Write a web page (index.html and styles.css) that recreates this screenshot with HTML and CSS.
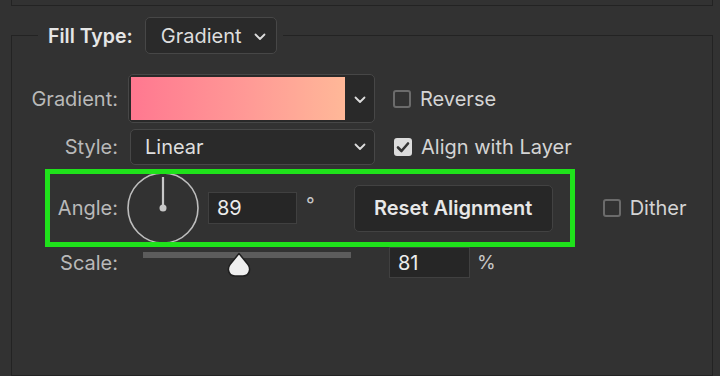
FILE: index.html
```html
<!DOCTYPE html>
<html>
<head>
<meta charset="utf-8">
<link rel="stylesheet" href="styles.css">
</head>
<body>
<div class="top-box"></div>
<fieldset class="panel">
  <legend class="legend">
    <span class="legend-label">Fill Type:</span>
    <span class="select select-fill">Gradient
      <svg class="chev" width="12" height="8" viewBox="0 0 12 8"><path d="M1.5 1.5 L6 6 L10.5 1.5" fill="none" stroke="#dcdcdc" stroke-width="1.8" stroke-linecap="round" stroke-linejoin="round"/></svg>
    </span>
  </legend>

  <div class="row row-gradient">
    <span class="label">Gradient:</span>
    <div class="grad-picker">
      <div class="grad-swatch"></div>
      <div class="grad-arrow">
        <svg width="12" height="8" viewBox="0 0 12 8"><path d="M1.5 1.5 L6 6 L10.5 1.5" fill="none" stroke="#dcdcdc" stroke-width="1.8" stroke-linecap="round" stroke-linejoin="round"/></svg>
      </div>
    </div>
    <label class="check"><span class="box"></span><span class="check-text">Reverse</span></label>
  </div>

  <div class="row row-style">
    <span class="label">Style:</span>
    <div class="select select-style"><span>Linear</span>
      <svg width="12" height="8" viewBox="0 0 12 8"><path d="M1.5 1.5 L6 6 L10.5 1.5" fill="none" stroke="#dcdcdc" stroke-width="1.8" stroke-linecap="round" stroke-linejoin="round"/></svg>
    </div>
    <label class="check check-align"><span class="box box-on">
      <svg width="14" height="12" viewBox="0 0 14 12"><path d="M2 6.5 L5.5 10 L12 2.5" fill="none" stroke="#333" stroke-width="2.6" stroke-linecap="round" stroke-linejoin="round"/></svg>
    </span><span class="check-text">Align with Layer</span></label>
  </div>

  <div class="row row-angle">
    <span class="label">Angle:</span>
    <svg class="dial" width="72" height="72" viewBox="0 0 72 72">
      <circle cx="36" cy="36" r="35" fill="none" stroke="#bdbdbd" stroke-width="1.6"/>
      <line x1="36" y1="36" x2="36" y2="5" stroke="#c8c8c8" stroke-width="2.2"/>
      <circle cx="36" cy="36" r="3.5" fill="#c8c8c8"/>
    </svg>
    <div class="num-input num-angle">89</div>
    <span class="unit unit-deg">°</span>
    <div class="btn">Reset Alignment</div>
    <label class="check check-dither"><span class="box"></span><span class="check-text">Dither</span></label>
  </div>

  <div class="row row-scale">
    <span class="label">Scale:</span>
    <div class="slider">
      <div class="track"></div>
      <svg class="thumb" width="24" height="26" viewBox="0 0 24 26"><path d="M12 1.5 L21 12.5 Q23 15 22.5 18.5 Q21.5 24 16 24 L8 24 Q2.5 24 1.5 18.5 Q1 15 3 12.5 Z" fill="#efefef" stroke="#1f1f1f" stroke-width="1.5" stroke-linejoin="round"/></svg>
    </div>
    <div class="num-input num-scale">81</div>
    <span class="unit">%</span>
  </div>
</fieldset>
</body>
</html>
```

FILE: styles.css
```css
*, *::before, *::after { box-sizing: border-box; }
html, body {
  margin: 0;
  padding: 0;
  background: #323232;
  width: 720px;
  height: 376px;
  overflow: hidden;
  font-family: Inter, "Noto Sans", "Liberation Sans", sans-serif;
  color: #dcdcdc;
}
.top-box {
  height: 6px;
  margin: 0 7px 0 11px;
  border-left: 1px solid #232323;
  border-right: 1px solid #232323;
  border-bottom: 1.5px solid #232323;
}
.panel {
  margin: 11px 7px 0 11px;
  padding: 20px 0 0 0;
  border: 1.5px solid #232323;
  height: 359px;
  min-width: 0;
}
.legend {
  margin-left: 26px;
  padding: 0 6px 0 10px;
  display: flex;
  align-items: center;
}
.legend-label {
  font-size: 19.5px;
  font-weight: 600;
  color: #e6e6e6;
  margin-right: 12px;
}
.select {
  display: flex;
  align-items: center;
  background: #2a2a2a;
  border: 1.5px solid #474747;
  border-radius: 5px;
  color: #dedede;
  font-size: 20px;
}
.select-fill {
  height: 37px;
  width: 132px;
  padding: 0 10px 0 15px;
  justify-content: space-between;
}
.select-fill .chev { margin-top: 2px; }
.row {
  display: flex;
  align-items: center;
}
.label {
  width: 106px;
  text-align: right;
  font-size: 20px;
  color: #b9b9b9;
  flex: none;
}
.row-gradient { height: 49px; }
.grad-picker {
  margin-left: 10px;
  width: 247px;
  height: 49px;
  display: flex;
  border: 1.5px solid #474747;
  border-radius: 5px;
  background: #292929;
  padding: 2px 0 2px 2px;
}
.grad-swatch {
  flex: none;
  width: 214px;
  height: 100%;
  background: linear-gradient(to right, #ff7890, #ff9a96 55%, #ffb898);
}
.grad-arrow {
  flex: 1;
  display: flex;
  align-items: center;
  justify-content: center;
  padding-top: 2px;
}
.check {
  display: flex;
  align-items: center;
  margin-left: 18px;
}
.box {
  width: 18px;
  height: 18px;
  border: 2px solid #6b6b6b;
  border-radius: 3px;
  display: flex;
  align-items: center;
  justify-content: center;
  flex: none;
}
.box-on {
  background: #dcdcdc;
  border-color: #dcdcdc;
}
.check-text {
  margin-left: 9px;
  font-size: 20px;
  color: #d4d4d4;
}
.row-style {
  margin-top: 6px;
  height: 36px;
}
.select-style {
  margin-left: 12px;
  width: 245px;
  height: 36px;
  padding: 0 8px 0 14px;
  justify-content: space-between;
}
.check-align { margin-left: 19px; }
.row-angle {
  position: relative;
  height: 78px;
  margin-top: 4px;
}
.row-angle::after {
  content: "";
  position: absolute;
  left: 33px;
  top: 0;
  width: 530px;
  height: 78px;
  border: 5px solid #1fe21b;
}
.dial {
  margin-left: 9px;
  flex: none;
}
.num-input {
  background: #262626;
  border: 1.5px solid #404040;
  font-size: 20px;
  color: #ececec;
  display: flex;
  align-items: center;
  padding-left: 8px;
  flex: none;
}
.num-angle {
  margin-left: 9px;
  width: 89px;
  height: 32px;
}
.unit {
  font-size: 19px;
  color: #c8c8c8;
  margin-left: 8px;
}
.unit-deg { margin-top: -8px; margin-left: 9px; }
.btn {
  margin-left: 39px;
  width: 199px;
  height: 47px;
  background: #272727;
  border: 1.5px solid #424242;
  border-radius: 5px;
  display: flex;
  align-items: center;
  justify-content: center;
  font-size: 20px;
  font-weight: 600;
  color: #e8e8e8;
  flex: none;
}
.check-dither { margin-left: 50px; }
.row-scale {
  height: 31px;
}
.slider {
  position: relative;
  margin-left: 25px;
  width: 208px;
  height: 31px;
  flex: none;
}
.track {
  margin-top: 5px;
  height: 6px;
  background: #5c5c5c;
}
.thumb {
  position: absolute;
  left: 84px;
  top: 5px;
}
.num-scale {
  margin-left: 38px;
  width: 81px;
  height: 31px;
}
.row-scale .unit { margin-left: 7px; }
```
